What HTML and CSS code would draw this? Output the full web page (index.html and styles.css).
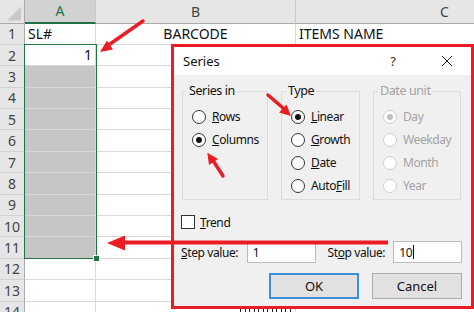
FILE: index.html
```html
<!DOCTYPE html>
<html>
<head>
  <title>Series</title>
  <link rel="stylesheet" href="styles.css">
</head>
<body>

  <div class="sheet">
    <div class="hdr corner"></div>
    <div class="hdr col sel">A</div>
    <div class="hdr col">B</div>
    <div class="hdr col">C</div>

    <div class="rh">1</div><div class="cell">SL#</div><div class="cell center">BARCODE</div><div class="cell">ITEMS NAME</div>
    <div class="rh">2</div><div class="cell right">1</div><div class="cell"></div><div class="cell"></div>
    <div class="rh">3</div><div class="cell fill"></div><div class="cell"></div><div class="cell"></div>
    <div class="rh">4</div><div class="cell fill"></div><div class="cell"></div><div class="cell"></div>
    <div class="rh">5</div><div class="cell fill"></div><div class="cell"></div><div class="cell"></div>
    <div class="rh">6</div><div class="cell fill"></div><div class="cell"></div><div class="cell"></div>
    <div class="rh">7</div><div class="cell fill"></div><div class="cell"></div><div class="cell"></div>
    <div class="rh">8</div><div class="cell fill"></div><div class="cell"></div><div class="cell"></div>
    <div class="rh">9</div><div class="cell fill"></div><div class="cell"></div><div class="cell"></div>
    <div class="rh">10</div><div class="cell fill"></div><div class="cell"></div><div class="cell"></div>
    <div class="rh">11</div><div class="cell fill"></div><div class="cell"></div><div class="cell"></div>
    <div class="rh">12</div><div class="cell"></div><div class="cell"></div><div class="cell"></div>
    <div class="rh">13</div><div class="cell"></div><div class="cell"></div><div class="cell"></div>
    <div class="rh last">14</div><div class="cell"></div><div class="cell"><div class="barcode"></div></div><div class="cell"></div>
  </div>

  <!-- selection A2:A11 -->
  <div class="selection"><span class="handle"></span></div>

  <div class="dialog">
    <div class="titlebar">
      <span class="title">Series</span>
      <span class="help">?</span>
      <svg class="close" width="12" height="12" viewBox="0 0 12 12">
        <path d="M1 1 L11 11 M11 1 L1 11" stroke="#222" stroke-width="1" fill="none"/>
      </svg>
    </div>

    <div class="body">
      <div class="groups">
        <fieldset class="group g-series">
          <legend>Series in</legend>
          <div class="radio"><span class="dot"></span><span><u>R</u>ows</span></div>
          <div class="radio"><span class="dot on"></span><span><u>C</u>olumns</span></div>
        </fieldset>
        <fieldset class="group g-type">
          <legend>Type</legend>
          <div class="radio"><span class="dot on"></span><span><u>L</u>inear</span></div>
          <div class="radio"><span class="dot"></span><span><u>G</u>rowth</span></div>
          <div class="radio"><span class="dot"></span><span><u>D</u>ate</span></div>
          <div class="radio"><span class="dot"></span><span>Auto<u>F</u>ill</span></div>
        </fieldset>
        <fieldset class="group g-date disabled">
          <legend>Date unit</legend>
          <div class="radio"><span class="dot on"></span><span>Day</span></div>
          <div class="radio"><span class="dot"></span><span>Weekday</span></div>
          <div class="radio"><span class="dot"></span><span>Month</span></div>
          <div class="radio"><span class="dot"></span><span>Year</span></div>
        </fieldset>
      </div>

      <div class="check"><span class="box"></span><span><u>T</u>rend</span></div>

      <div class="values">
        <span class="vlabel"><u>S</u>tep value:</span>
        <div class="input">1</div>
        <span class="vlabel stop">St<u>o</u>p value:</span>
        <div class="input">10<span class="caret"></span></div>
      </div>

      <div class="buttons">
        <div class="btn default">OK</div>
        <div class="btn">Cancel</div>
      </div>
    </div>
  </div>

  <!-- red annotation arrows -->
  <svg class="marks" width="474" height="312" viewBox="0 0 474 312">
    <g stroke="#ec1c24" stroke-width="3.5" fill="none" stroke-linecap="round">
      <path d="M143 21 L110 44"/>
      <path d="M268 95 L283 108"/>
      <path d="M223 176 L214 162"/>
      <path d="M124 242.5 L388 242.5" stroke-width="4" stroke-linecap="butt"/>
    </g>
    <g fill="#ec1c24">
      <polygon points="100,52 113,49.5 107,40.5"/>
      <polygon points="291,116 279,112.5 286.5,104.5"/>
      <polygon points="207.3,152.7 218,159 209,165"/>
      <polygon points="107,243 125,235.5 125,250.5"/>
    </g>
  </svg>

</body>
</html>
```

FILE: styles.css
```css
body {
  margin: 0;
  width: 474px;
  height: 312px;
  overflow: hidden;
  position: relative;
  background: #fff;
  font-family: 'Noto Sans', 'Open Sans', sans-serif;
}

/* spreadsheet */

.sheet {
  display: grid;
  grid-template-columns: 25px 71px 200px 298px;
  grid-template-rows: 23.5px repeat(14, 21.4px);
  font-size: 14px;
  color: #111;
}

.hdr {
  background: #e6e6e6;
  border-right: 1px solid #cbcbcb;
  border-bottom: 1px solid #ababab;
  box-sizing: border-box;
  display: flex;
  align-items: center;
  justify-content: center;
  color: #444;
  font-size: 14px;
}

.corner {
  position: relative;
  border-right-color: #ababab;
}

.corner::after {
  content: "";
  position: absolute;
  right: 3px;
  bottom: 2px;
  width: 14px;
  height: 14px;
  background: #c9c9c9;
  clip-path: polygon(100% 0, 100% 100%, 0 100%);
}

.col.sel {
  background: #d2d2d2;
  color: #217346;
  border-bottom: 2px solid #217346;
}

.rh {
  background: #e6e6e6;
  border-right: 1px solid #ababab;
  border-bottom: 1px solid #d0d0d0;
  box-sizing: border-box;
  display: flex;
  align-items: center;
  justify-content: center;
  color: #444;
  font-size: 14px;
}

/* row 14 is only half in the window */
.rh.last {
  align-items: flex-start;
  padding-top: 3px;
  line-height: 1;
}

.cell {
  border-right: 1px solid #d9d9d9;
  border-bottom: 1px solid #d9d9d9;
  box-sizing: border-box;
  padding: 0 3px;
  display: flex;
  align-items: center;
  line-height: 1;
  white-space: nowrap;
  overflow: hidden;
}

.cell.center {
  justify-content: center;
}

.cell.right {
  justify-content: flex-end;
}

.cell.fill {
  background: #c6c6c6;
}

.barcode {
  align-self: flex-start;
  margin: 7px 0 0 141px;
  width: 155px;
  height: 10px;
  background: repeating-linear-gradient(90deg, #222 0 1.5px, transparent 1.5px 5px, #222 5px 6px, transparent 6px 9px);
}

.selection {
  position: absolute;
  left: 24px;
  top: 44px;
  width: 73px;
  height: 215px;
  border: 1.5px solid #217346;
  box-sizing: border-box;
}

.handle {
  position: absolute;
  right: -4px;
  bottom: -4px;
  width: 5px;
  height: 5px;
  background: #217346;
  border: 1px solid #fff;
}

/* dialog */

.dialog {
  position: absolute;
  left: 171px;
  top: 44px;
  width: 303px;
  height: 265px;
  box-sizing: border-box;
  border: 3px solid #ec1c24;
  background: #f0f0f0;
  font-size: 12px;
  letter-spacing: -0.4px;
  color: #111;
}

.titlebar {
  height: 28px;
  background: #fff;
  display: flex;
  align-items: center;
  padding: 0 0 0 9px;
  letter-spacing: 0;
}

.title {
  font-size: 13px;
  flex: 1;
}

.help {
  font-size: 13px;
  color: #333;
  margin-right: 45px;
}

.close {
  margin-right: 18px;
}

.body {
  padding: 8px 9px 0 8px;
}

.groups {
  display: flex;
  gap: 13px;
}

.group {
  margin: 0;
  padding: 6px 0 3px 9px;
  border: 1px solid #dcdcdc;
  min-width: 0;
  box-sizing: border-box;
  height: 117px;
}

.g-series { width: 86px; }
.g-type { width: 79px; }
.g-date { width: 88px; }

legend {
  padding: 0 2px;
  margin-left: -5px;
  line-height: 16px;
  font-size: 12.5px;
}

.radio {
  display: flex;
  align-items: center;
  gap: 6px;
  height: 23px;
  white-space: nowrap;
}

.dot {
  width: 14px;
  height: 14px;
  box-sizing: border-box;
  border: 1px solid #333;
  border-radius: 50%;
  background: #fff;
  flex: none;
  display: flex;
  align-items: center;
  justify-content: center;
}

.dot.on::after {
  content: "";
  width: 6px;
  height: 6px;
  border-radius: 50%;
  background: #111;
}

.disabled {
  color: #a3a3a3;
}

.disabled .dot {
  border-color: #cfcfcf;
}

.disabled .dot.on::after {
  background: #c0c0c0;
}

.check {
  display: flex;
  align-items: center;
  gap: 5px;
  margin: 15px 0 0 -1px;
  height: 14px;
}

.box {
  width: 14px;
  height: 14px;
  box-sizing: border-box;
  border: 1px solid #333;
  background: #fff;
}

.values {
  display: flex;
  align-items: center;
  margin: 12px 0 0 -1px;
  height: 22px;
}

.vlabel {
  width: 66px;
  white-space: nowrap;
}

.vlabel.stop {
  margin-left: 12px;
}

.input {
  width: 69px;
  height: 22px;
  box-sizing: border-box;
  border: 1px solid #bcbcbc;
  background: #fff;
  padding: 2px 5px;
  display: flex;
  align-items: center;
}

.caret {
  width: 1px;
  height: 14px;
  background: #000;
  margin-left: 1px;
}

.buttons {
  display: flex;
  justify-content: flex-end;
  gap: 13px;
  margin-top: 10px;
}

.btn {
  width: 90px;
  height: 26px;
  box-sizing: border-box;
  border: 1px solid #adadad;
  background: #e1e1e1;
  display: flex;
  align-items: center;
  justify-content: center;
  font-size: 13px;
  letter-spacing: 0;
}

.btn.default {
  border: 2px solid #3c8fd8;
}

.marks {
  position: absolute;
  left: 0;
  top: 0;
  pointer-events: none;
}
```
